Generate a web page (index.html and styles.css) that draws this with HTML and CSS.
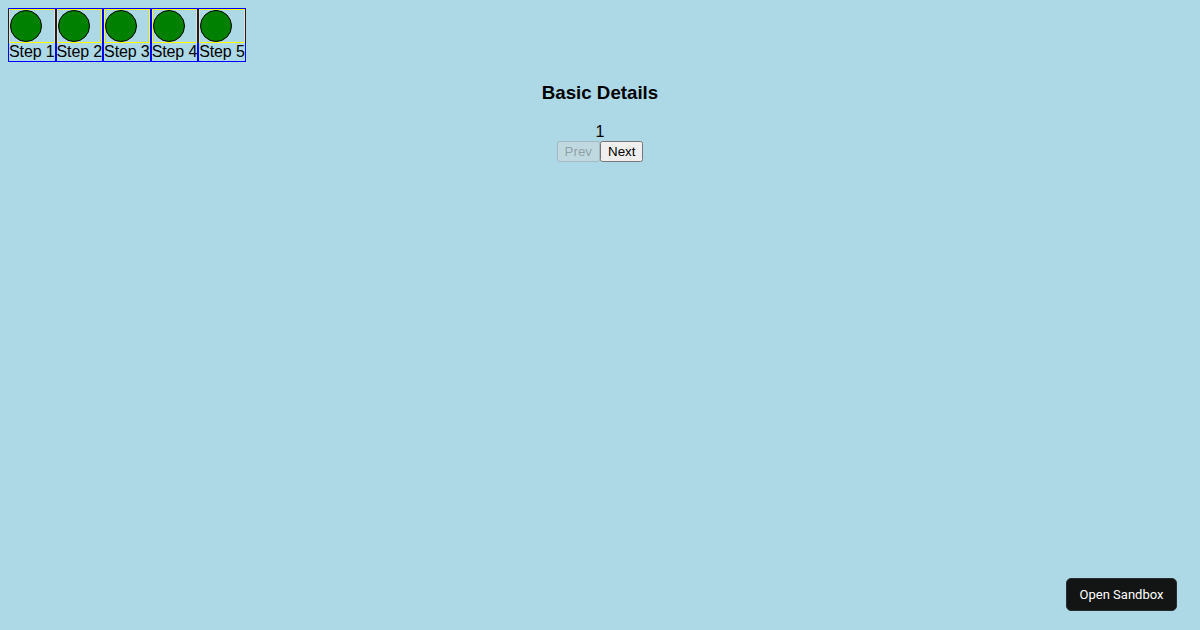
FILE: index.html
```html
<!DOCTYPE html>
<html>
<head>
<meta charset="utf-8">
<link rel="stylesheet" href="styles.css">
</head>
<body>
<div class="stepper">
  <div class="step"><div class="dot-wrap"><div class="dot"></div></div><div class="label">Step 1</div></div>
  <div class="step"><div class="dot-wrap"><div class="dot"></div></div><div class="label">Step 2</div></div>
  <div class="step"><div class="dot-wrap"><div class="dot"></div></div><div class="label">Step 3</div></div>
  <div class="step"><div class="dot-wrap"><div class="dot"></div></div><div class="label">Step 4</div></div>
  <div class="step"><div class="dot-wrap"><div class="dot"></div></div><div class="label">Step 5</div></div>
</div>
<div class="content">
  <h3 class="title">Basic Details</h3>
  <div class="page-num">1</div>
  <div class="nav"><button class="btn" disabled>Prev</button><button class="btn">Next</button></div>
</div>
<button class="sandbox">Open Sandbox</button>
</body>
</html>
```
FILE: styles.css
```css
html, body {
  background: #add8e6;
}
body {
  margin: 8px;
  font-family: "Liberation Sans", Arial, sans-serif;
  font-size: 16px;
  color: #000;
}
.stepper {
  display: flex;
}
.step {
  border: 1px solid blue;
  display: flex;
  flex-direction: column;
}
.dot-wrap {
  border: 1px solid yellow;
}
.dot {
  width: 30px;
  height: 30px;
  border-radius: 50%;
  background: green;
  border: 1px solid #000;
}
.label {
  line-height: 18px;
  white-space: nowrap;
  letter-spacing: -0.12px;
}
.content {
  text-align: center;
}
.title {
  font-size: 18.72px;
  line-height: 23.5px;
  margin: 18.72px 0;
}
.nav {
  display: flex;
  justify-content: center;
}
.btn {
  font-family: "Liberation Sans", Arial, sans-serif;
  font-size: 13.333px;
}
.sandbox {
  position: fixed;
  right: 23px;
  bottom: 19px;
  width: 111px;
  height: 33px;
  background: #131515;
  color: #fff;
  border: 1px solid #2a2d2d;
  border-radius: 5px;
  font-family: Roboto, "Liberation Sans", sans-serif;
  font-size: 13px;
  padding: 0;
}
```
